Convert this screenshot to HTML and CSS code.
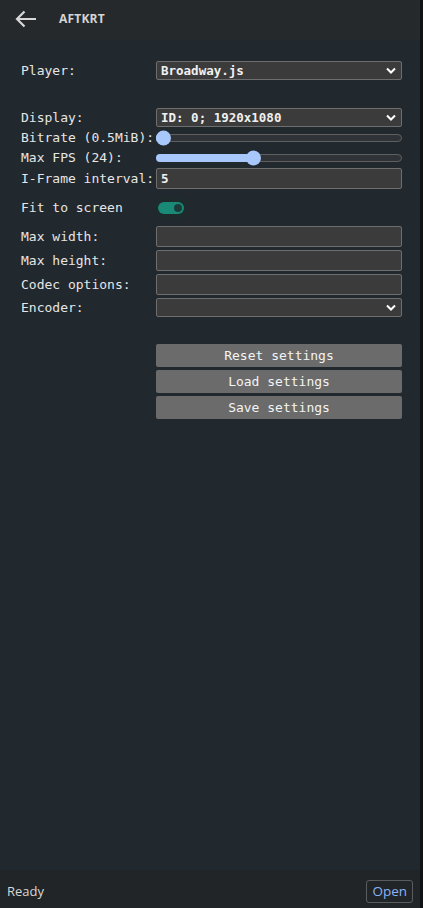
FILE: index.html
```html
<!DOCTYPE html>
<html>
<head>
<meta charset="utf-8">
<link rel="stylesheet" href="styles.css">
</head>
<body>
<div class="app">
  <header class="topbar">
    <svg class="back" width="22" height="18" viewBox="0 0 22 18"><path d="M21 9H2.5M9.5 1.5L2 9l7.5 7.5" fill="none" stroke="#d8d8d8" stroke-width="2.2"/></svg>
    <span class="title">AFTKRT</span>
  </header>
  <main class="content">
    <div class="row r-player"><label>Player:</label><div class="select"><span>Broadway.js</span><svg class="chev" width="10" height="7" viewBox="0 0 10 7"><path d="M1 1.5l4 4 4-4" fill="none" stroke="#fff" stroke-width="2"/></svg></div></div>
    <div class="row r-display"><label>Display:</label><div class="select"><span>ID: 0; 1920x1080</span><svg class="chev" width="10" height="7" viewBox="0 0 10 7"><path d="M1 1.5l4 4 4-4" fill="none" stroke="#fff" stroke-width="2"/></svg></div></div>
    <div class="row r-slider"><label>Bitrate (0.5MiB):</label><div class="slider"><div class="fill" style="width:calc(0 * (100% - 15px) + 7px)"></div><div class="thumb" style="left:calc(0 * (100% - 15px))"></div></div></div>
    <div class="row r-slider"><label>Max FPS (24):</label><div class="slider"><div class="fill" style="width:calc(0.395 * (100% - 15px) + 7px)"></div><div class="thumb" style="left:calc(0.395 * (100% - 15px))"></div></div></div>
    <div class="row r-input"><label>I-Frame interval:</label><div class="input">5</div></div>
    <div class="row r-toggle"><label>Fit to screen</label><div class="toggle"><div class="knob"></div></div></div>
    <div class="row r-input"><label>Max width:</label><div class="input"></div></div>
    <div class="row r-input"><label>Max height:</label><div class="input"></div></div>
    <div class="row r-input"><label>Codec options:</label><div class="input"></div></div>
    <div class="row r-enc"><label>Encoder:</label><div class="select"><span></span><svg class="chev" width="10" height="7" viewBox="0 0 10 7"><path d="M1 1.5l4 4 4-4" fill="none" stroke="#fff" stroke-width="2"/></svg></div></div>
    <div class="buttons">
      <div class="btn">Reset settings</div>
      <div class="btn">Load settings</div>
      <div class="btn">Save settings</div>
    </div>
  </main>
  <footer class="status">
    <span class="ready">Ready</span>
    <span class="open">Open</span>
  </footer>
</div>
<div class="edge"></div>
</body>
</html>
```
FILE: styles.css
```css
* { box-sizing: border-box; }
html, body { margin: 0; padding: 0; height: 100%; }
body {
  background: #22292e;
  display: flex;
  font-family: "DejaVu Sans Mono", "Liberation Mono", monospace;
  color: #e6e6e6;
}
.app {
  flex: 1;
  display: flex;
  flex-direction: column;
  height: 908px;
}
.edge { width: 3px; background: #101214; }
.topbar {
  height: 40px;
  background: #26292c;
  display: flex;
  align-items: center;
  padding-left: 15px;
  flex: none;
}
.back { display: block; margin-top: -2px; }
.title {
  font-family: "Open Sans", sans-serif;
  font-weight: 700;
  font-size: 12px;
  color: #d4d4d4;
  margin-left: 22px;
  margin-top: -3px;
  letter-spacing: 0.2px;
}
.content {
  flex: 1;
  padding: 21px 18px 0 21px;
  display: flex;
  flex-direction: column;
}
.row {
  display: grid;
  grid-template-columns: 135px 1fr;
  align-items: center;
  font-size: 13px;
}
.row label { white-space: nowrap; line-height: 16px; }
.r-player { height: 19px; margin-bottom: 28px; }
.r-display { height: 19px; margin-bottom: 1px; }
.r-slider { height: 20px; }
.r-input { height: 21px; margin-bottom: 3px; }
.r-toggle { height: 28px; margin-top: 2px; margin-bottom: 4px; }
.r-enc { height: 19px; }
.select, .input {
  height: 100%;
  background: #3b3b3b;
  border: 1px solid #6e6e6e;
  border-radius: 2px;
  display: flex;
  align-items: center;
  justify-content: space-between;
  padding: 0 5px 0 4px;
  font-weight: 700;
  font-size: 12.5px;
  color: #f0f0f0;
}
.chev { display: block; }
.slider {
  position: relative;
  height: 8px;
  border: 1px solid #5e5e5e;
  border-radius: 4px;
  background: #2f3337;
}
.slider .fill {
  position: absolute;
  left: -1px; top: -1px; bottom: -1px;
  background: #a8c7fa;
  border-radius: 4px;
}
.slider .thumb {
  position: absolute;
  top: 50%;
  width: 15px; height: 15px;
  border-radius: 50%;
  background: #a8c7fa;
  transform: translate(-1px, -50%);
}
.toggle {
  width: 26px; height: 12px;
  border-radius: 6px;
  background: #198a75;
  position: relative;
  margin-left: 2px;
  box-shadow: 0 0 0 5px #1f2a2c;
}
.toggle .knob {
  position: absolute;
  right: 2px; top: 2px;
  width: 8px; height: 8px; border-radius: 50%;
  background: #1d3a3a;
}
.buttons {
  margin-top: 27px;
  margin-left: 135px;
  display: flex;
  flex-direction: column;
  gap: 3px;
}
.btn {
  height: 23px;
  background: #6b6b6b;
  border-radius: 2px;
  color: #f4f4f4;
  font-size: 13px;
  display: flex;
  align-items: center;
  justify-content: center;
}
.status {
  height: 38px;
  flex: none;
  background: #212527;
  display: flex;
  align-items: center;
  justify-content: space-between;
  padding: 4px 7px 0 7px;
  font-family: "Open Sans", sans-serif;
  font-size: 13px;
}
.ready { color: #d8d8d8; }
.open {
  border: 1px solid #5a5d60;
  border-radius: 3px;
  padding: 1px 5px 2px;
  color: #8ab4f8;
  font-size: 13.5px;
  line-height: 18px;
}
```
